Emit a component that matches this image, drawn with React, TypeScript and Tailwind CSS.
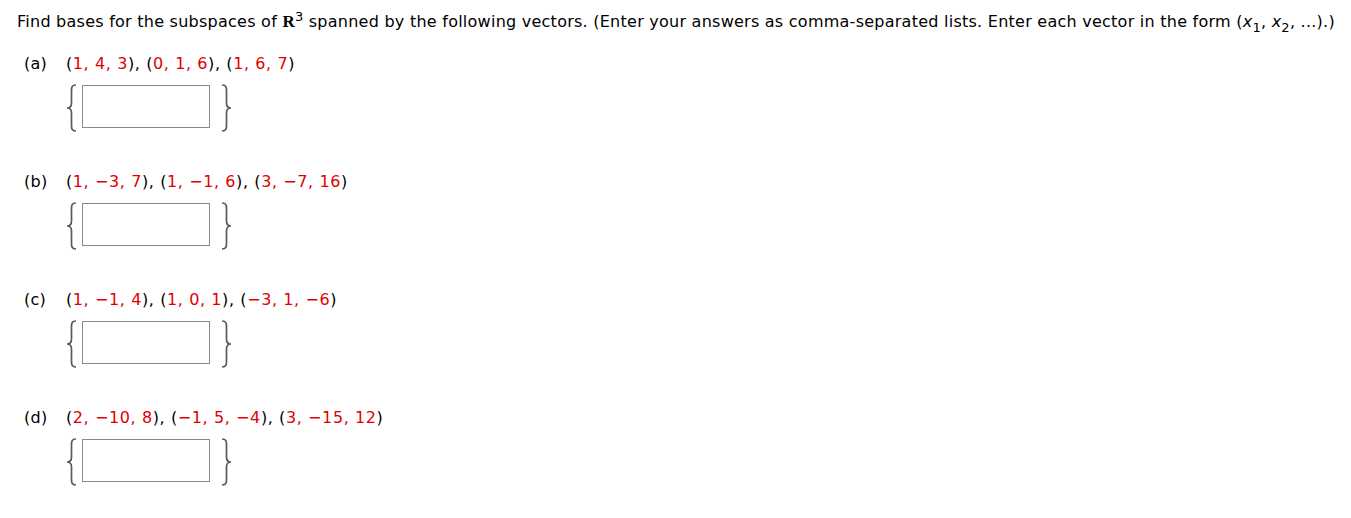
import React from 'react';

type Part = {
  label: string;
  vectors: string[][];
};

const parts: Part[] = [
  { label: '(a)', vectors: [['1', '4', '3'], ['0', '1', '6'], ['1', '6', '7']] },
  { label: '(b)', vectors: [['1', '\u22123', '7'], ['1', '\u22121', '6'], ['3', '\u22127', '16']] },
  { label: '(c)', vectors: [['1', '\u22121', '4'], ['1', '0', '1'], ['\u22123', '1', '\u22126']] },
  { label: '(d)', vectors: [['2', '\u221210', '8'], ['\u22121', '5', '\u22124'], ['3', '\u221215', '12']] },
];

const Brace = ({ flip }: { flip?: boolean }) => (
  <svg
    width="12"
    height="48"
    viewBox="0 0 12 48"
    className={flip ? '-scale-x-100' : ''}
    fill="none"
    stroke="#5a5a5a"
    strokeWidth="1.7"
  >
    <path d="M10 1 C5 1 5.5 4 5.5 9 L5.5 19 C5.5 22.5 4 24 1 24 C4 24 5.5 25.5 5.5 29 L5.5 39 C5.5 44 5 47 10 47" />
  </svg>
);

const VectorList = ({ vectors }: { vectors: string[][] }) => (
  <span className="tracking-[0.6px]">
    {vectors.map((v, i) => (
      <span key={i}>
        (<span className="text-[#e00000]">{v.join(', ')}</span>)
        {i < vectors.length - 1 ? ', ' : ''}
      </span>
    ))}
  </span>
);

export default function App() {
  return (
    <div
      className="min-h-screen bg-white text-[16px] leading-[18px] tracking-[0.25px] text-black"
      style={{ fontFamily: '"DejaVu Sans", Verdana, sans-serif' }}
    >
      <div className="pl-[17px] pt-[13px]">
        <p className="whitespace-nowrap">
          Find bases for the subspaces of{' '}
          <b style={{ fontFamily: '"Liberation Serif", serif' }} className="text-[17px]">R</b>
          <sup className="text-[13px]">3</sup> spanned by the following vectors. (Enter your answers as
          comma-separated lists. Enter each vector in the form (<i>x</i>
          <sub className="-bottom-[5px] text-[13px]">1</sub>, <i>x</i>
          <sub className="-bottom-[5px] text-[13px]">2</sub>, ...).)
        </p>

        <div className="mt-[24px] flex flex-col">
          {parts.map((p) => (
            <div key={p.label} className="h-[118px]">
              <div className="flex pl-[7px]">
                <span className="w-[42px]">{p.label}</span>
                <VectorList vectors={p.vectors} />
              </div>
              <div className="mt-[11px] flex items-start pl-[49px]">
                <Brace />
                <div className="ml-[4px] mt-[1px] h-[43px] w-[128px] border border-[#8a8a8a] bg-white" />
                <div className="ml-[10px]">
                  <Brace flip />
                </div>
              </div>
            </div>
          ))}
        </div>
      </div>
    </div>
  );
}
